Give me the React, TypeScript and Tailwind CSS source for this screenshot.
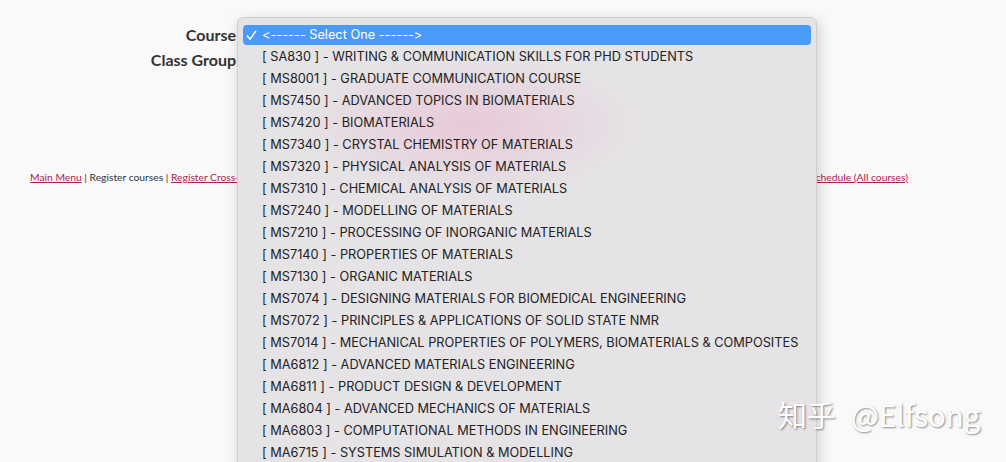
const courses = [
  "[ SA830 ] - WRITING & COMMUNICATION SKILLS FOR PHD STUDENTS",
  "[ MS8001 ] - GRADUATE COMMUNICATION COURSE",
  "[ MS7450 ] - ADVANCED TOPICS IN BIOMATERIALS",
  "[ MS7420 ] - BIOMATERIALS",
  "[ MS7340 ] - CRYSTAL CHEMISTRY OF MATERIALS",
  "[ MS7320 ] - PHYSICAL ANALYSIS OF MATERIALS",
  "[ MS7310 ] - CHEMICAL ANALYSIS OF MATERIALS",
  "[ MS7240 ] - MODELLING OF MATERIALS",
  "[ MS7210 ] - PROCESSING OF INORGANIC MATERIALS",
  "[ MS7140 ] - PROPERTIES OF MATERIALS",
  "[ MS7130 ] - ORGANIC MATERIALS",
  "[ MS7074 ] - DESIGNING MATERIALS FOR BIOMEDICAL ENGINEERING",
  "[ MS7072 ] - PRINCIPLES & APPLICATIONS OF SOLID STATE NMR",
  "[ MS7014 ] - MECHANICAL PROPERTIES OF POLYMERS, BIOMATERIALS & COMPOSITES",
  "[ MA6812 ] - ADVANCED MATERIALS ENGINEERING",
  "[ MA6811 ] - PRODUCT DESIGN & DEVELOPMENT",
  "[ MA6804 ] - ADVANCED MECHANICS OF MATERIALS",
  "[ MA6803 ] - COMPUTATIONAL METHODS IN ENGINEERING",
  "[ MA6715 ] - SYSTEMS SIMULATION & MODELLING",
];

function CourseMenu() {
  return (
    <div className="absolute left-[237px] top-[17px] h-[470px] w-[580px] overflow-hidden rounded-[6px] border border-[#cfcdd1] bg-[radial-gradient(ellipse_170px_70px_at_40%_23%,#e7c9d7_0%,#e7d6df_50%,#e5e3e6_100%)] px-[5px] pt-[6px] shadow-[2px_4px_14px_rgba(0,0,0,0.18)] font-['Inter','Liberation_Sans',sans-serif] text-[12.75px] text-[#222] [font-feature-settings:'calt'_0,'liga'_0]">
      <div className="py-px">
        <div className="flex h-[20px] items-center rounded-[4px] bg-[#4a9af8] text-white">
          <svg viewBox="0 0 12 12" className="ml-[3px] mr-[5px] h-[11px] w-[11px]" fill="none" stroke="white" strokeWidth="1.6" strokeLinecap="round" strokeLinejoin="round">
            <path d="M1.5 6.5 L4.5 10 L10.5 1.5" />
          </svg>
          <span>{"<------ Select One ------>"}</span>
        </div>
      </div>
      {courses.map((c) => (
        <div key={c} className="flex h-[22px] items-center pl-[19px]">
          {c}
        </div>
      ))}
    </div>
  );
}

export default function App() {
  return (
    <main className="relative h-[462px] w-full overflow-hidden bg-[#f9f9f9] font-['Lato','Liberation_Sans',sans-serif] text-[#333]">
      <div className="w-[236px] pt-[22px] text-right text-[16px] font-bold leading-[25px]">
        <div>Course</div>
        <div>Class Group</div>
      </div>

      <div className="mt-[98px] flex w-[908px] justify-between pl-[30px] text-[10.3px] leading-[15px]">
        <div className="whitespace-nowrap">
          <a href="#" className="text-[#a8234f] underline">Main Menu</a>
          <span> | Register courses | </span>
          <a href="#" className="text-[#a8234f] underline">Register Cross-Faculty</a>
        </div>
        <div className="whitespace-nowrap">
          <a href="#" className="text-[#a8234f] underline">Schedule (All courses)</a>
        </div>
      </div>

      <CourseMenu />

      <div className="absolute left-[778px] top-[396px] flex items-center gap-[15px] font-['Noto_Sans_CJK_SC',sans-serif] leading-[36px] text-white [text-shadow:1px_1px_2px_rgba(0,0,0,0.45)]">
        <span className="text-[29px]">知乎</span>
        <span className="text-[29.5px]">@Elfsong</span>
      </div>
    </main>
  );
}
